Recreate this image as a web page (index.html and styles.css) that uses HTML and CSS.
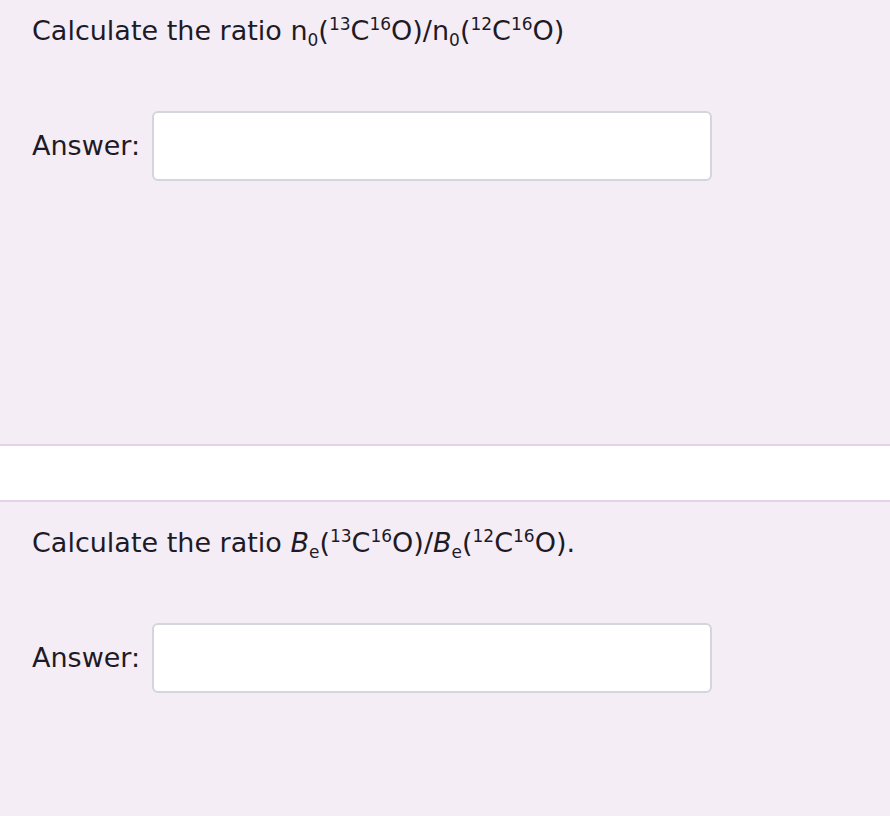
FILE: index.html
```html
<!DOCTYPE html>
<html>
<head>
<meta charset="utf-8">
<link rel="stylesheet" href="styles.css">
</head>
<body>
<div class="panel panel-first">
  <p class="question">Calculate the ratio n<sub>0</sub>(<sup>13</sup>C<sup>16</sup>O)/n<sub>0</sub>(<sup>12</sup>C<sup>16</sup>O)</p>
  <div class="answer">
    <label class="answer-label">Answer:</label>
    <input class="answer-input" type="text">
  </div>
</div>
<div class="panel panel-second">
  <p class="question">Calculate the ratio <i>B</i><sub>e</sub>(<sup>13</sup>C<sup>16</sup>O)/<i>B</i><sub>e</sub>(<sup>12</sup>C<sup>16</sup>O).</p>
  <div class="answer">
    <label class="answer-label">Answer:</label>
    <input class="answer-input" type="text">
  </div>
</div>
</body>
</html>
```
FILE: styles.css
```css
html, body {
  margin: 0;
  padding: 0;
  background: #ffffff;
}
body {
  font-family: "DejaVu Sans", "Noto Sans", sans-serif;
  color: #1e1a26;
  overflow: hidden;
  height: 816px;
}
.panel {
  background: #f5edf6;
  padding-left: 32px;
  padding-right: 32px;
}
.panel-first {
  padding-top: 12px;
  padding-bottom: 263px;
  border-bottom: 2px solid #e7d0ea;
}
.panel-second {
  margin-top: 54px;
  padding-top: 22px;
  padding-bottom: 263px;
  border-top: 2px solid #e7d0ea;
}
.question {
  margin: 0;
  font-size: 27px;
  line-height: 38px;
}
.question sup,
.question sub {
  font-size: 17px;
  line-height: 0;
}
.question sup {
  vertical-align: 10px;
}
.question sub {
  vertical-align: -6px;
}
.answer {
  display: flex;
  align-items: center;
  gap: 12px;
  margin-top: 61px;
}
.answer-label {
  font-size: 27px;
  line-height: 38px;
}
.answer-input {
  flex-shrink: 0;
  box-sizing: border-box;
  width: 560px;
  height: 70px;
  margin: 0;
  border: 2px solid #d3d6dc;
  border-radius: 6px;
  background: #ffffff;
  padding: 0 12px;
  font: inherit;
  outline: none;
}
```
